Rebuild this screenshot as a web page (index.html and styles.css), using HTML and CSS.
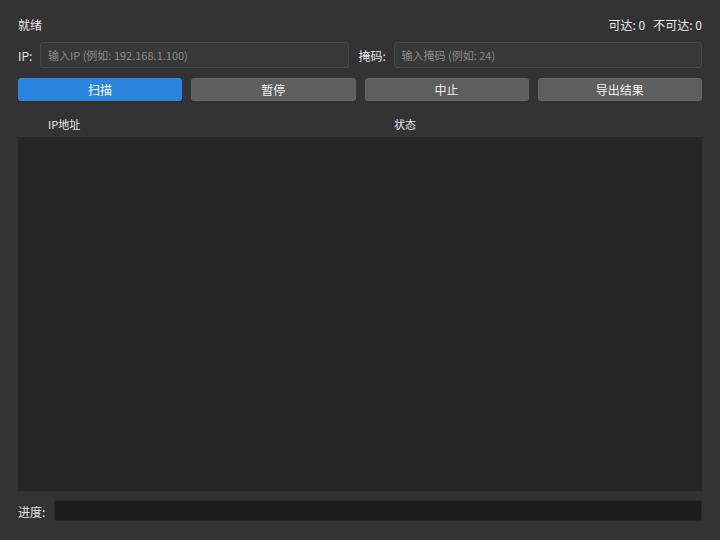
FILE: index.html
```html
<!DOCTYPE html>
<html lang="zh">
<head>
<meta charset="utf-8">
<link rel="stylesheet" href="styles.css">
</head>
<body>
<div class="app">
  <div class="status-row">
    <span class="status">就绪</span>
    <span class="counts">可达: 0&nbsp;&nbsp;&nbsp;不可达: 0</span>
  </div>
  <div class="input-row">
    <label class="lbl lbl-ip">IP:</label>
    <div class="field"><span class="ph">输入IP (例如: 192.168.1.100)</span></div>
    <label class="lbl lbl-mask">掩码:</label>
    <div class="field"><span class="ph">输入掩码 (例如: 24)</span></div>
  </div>
  <div class="btn-row">
    <div class="btn primary">扫描</div>
    <div class="btn">暂停</div>
    <div class="btn">中止</div>
    <div class="btn">导出结果</div>
  </div>
  <div class="table-head">
    <span class="col col-ip">IP地址</span>
    <span class="col col-state">状态</span>
  </div>
  <div class="table-body"></div>
  <div class="progress-row">
    <span class="lbl">进度:</span>
    <div class="bar"></div>
  </div>
</div>
</body>
</html>
```
FILE: styles.css
```css
html, body {
  margin: 0;
  padding: 0;
  background: #333333;
}
body {
  font-family: "Noto Sans CJK SC", "Noto Sans", sans-serif;
  color: #e6e6e6;
  font-size: 12px;
}
.app {
  box-sizing: border-box;
  width: 720px;
  height: 540px;
  padding: 16px 18px 19px 18px;
  display: flex;
  flex-direction: column;
}
.status-row {
  box-sizing: border-box;
  height: 18px;
  padding-bottom: 2px;
  display: flex;
  justify-content: space-between;
  align-items: center;
  font-size: 12px;
}
.counts {
  font-size: 12px;
  color: #ececec;
}
.input-row {
  margin-top: 8px;
  height: 26px;
  display: flex;
  align-items: center;
}
.lbl {
  font-size: 12px;
  color: #e6e6e6;
  white-space: nowrap;
}
.lbl-ip { width: 22px; }
.lbl-mask { margin-left: 10px; width: 35px; }
.field {
  flex: 1;
  box-sizing: border-box;
  height: 26px;
  background: #383838;
  border: 1px solid #484848;
  border-radius: 3px;
  display: flex;
  align-items: center;
  padding-left: 7px;
}
.ph {
  color: #8a8a8a;
  font-size: 11px;
}
.btn-row {
  margin-top: 10px;
  height: 23px;
  display: flex;
  gap: 9px;
}
.btn {
  flex: 1;
  box-sizing: border-box;
  background: #5e5e5e;
  border: 1px solid #666666;
  border-radius: 3px;
  display: flex;
  align-items: center;
  justify-content: center;
  font-size: 12px;
  color: #f0f0f0;
}
.btn.primary {
  background: #2a84dc;
  border-color: #2f88de;
  color: #ffffff;
}
.table-head {
  box-sizing: border-box;
  margin-top: 11px;
  height: 25px;
  padding-bottom: 2px;
  display: flex;
  align-items: center;
  font-size: 11px;
  color: #e6e6e6;
}
.col-ip { margin-left: 30px; width: 346px; }
.table-body {
  flex: 1;
  background: #262626;
}
.progress-row {
  margin-top: 9px;
  height: 21px;
  display: flex;
  align-items: center;
}
.progress-row .lbl { width: 36px; padding-top: 1px; }
.bar {
  flex: 1;
  height: 21px;
  box-sizing: border-box;
  background: #1c1c1c;
  border: 1px solid #2a2a2a;
  border-radius: 2px;
}
```
